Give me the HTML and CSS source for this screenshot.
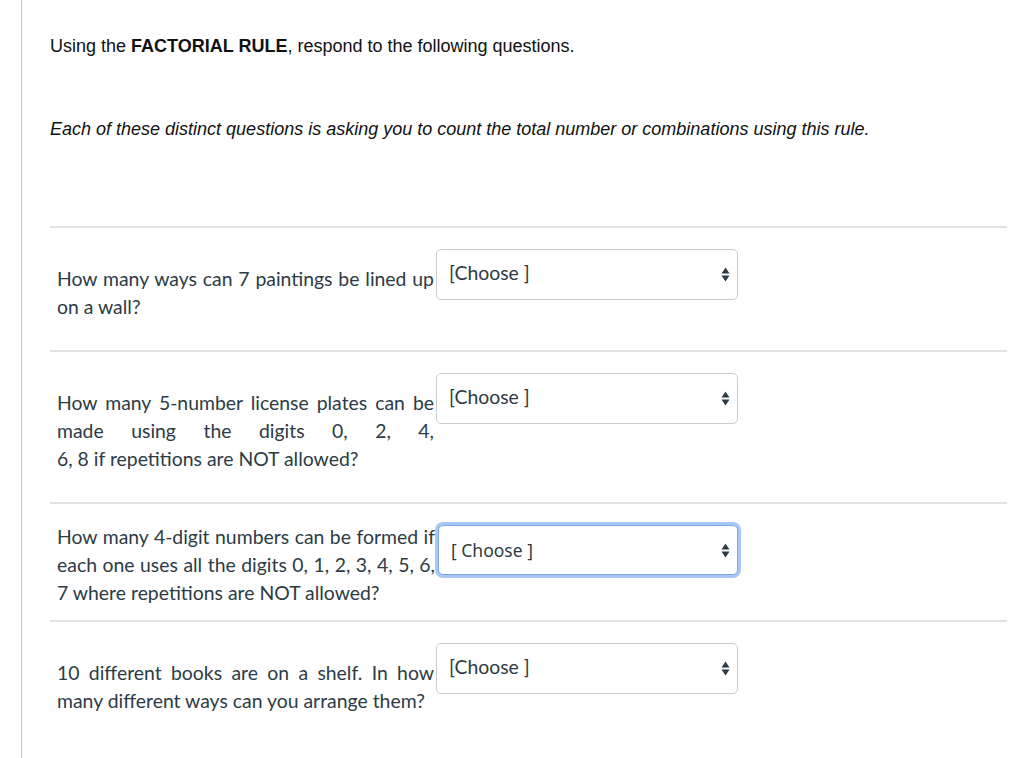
FILE: index.html
```html
<!DOCTYPE html>
<html lang="en">
    <head>
        <meta charset="utf-8">
        <title>Factorial Rule Quiz</title>
        <link rel="stylesheet" href="styles.css">
    </head>
    <body>
        <div class='page'>

            <div class='intro'>
                <p>Using the <strong>FACTORIAL RULE</strong>, respond to the following questions.</p>
                <p class='note'><em>Each of these distinct questions is asking you to count the total number or combinations using this rule.</em></p>
            </div>

            <div class='question'>
                <div class='qText'>How many ways can 7 paintings be lined up on a wall?</div>
                <div class='select'>
                    <span>[Choose ]</span>
                    <svg class='arrows' width='9' height='15' viewBox='0 0 9 15'><path d='M4.5 0.5 L8.5 6.5 L0.5 6.5 Z M0.5 8.5 L8.5 8.5 L4.5 14.5 Z'/></svg>
                </div>
            </div>

            <div class='question'>
                <div class='qText'>How many 5-number license plates can be made using the digits 0, 2, 4, <span class='keep'>6, 8 if repetitions</span> are NOT allowed?</div>
                <div class='select'>
                    <span>[Choose ]</span>
                    <svg class='arrows' width='9' height='15' viewBox='0 0 9 15'><path d='M4.5 0.5 L8.5 6.5 L0.5 6.5 Z M0.5 8.5 L8.5 8.5 L4.5 14.5 Z'/></svg>
                </div>
            </div>

            <div class='question focused'>
                <div class='qText'>How many 4-digit numbers can be formed if each one uses all the digits 0, 1, 2, 3, 4, 5, 6, 7 where repetitions are NOT allowed?</div>
                <div class='select'>
                    <span>[ Choose ]</span>
                    <svg class='arrows' width='9' height='15' viewBox='0 0 9 15'><path d='M4.5 0.5 L8.5 6.5 L0.5 6.5 Z M0.5 8.5 L8.5 8.5 L4.5 14.5 Z'/></svg>
                </div>
            </div>

            <div class='question'>
                <div class='qText'>10 different books are on a shelf. In how many different ways can you arrange them?</div>
                <div class='select'>
                    <span>[Choose ]</span>
                    <svg class='arrows' width='9' height='15' viewBox='0 0 9 15'><path d='M4.5 0.5 L8.5 6.5 L0.5 6.5 Z M0.5 8.5 L8.5 8.5 L4.5 14.5 Z'/></svg>
                </div>
            </div>

        </div>
    </body>
</html>
```

FILE: styles.css
```css
body
{
    margin:           0;
    background-color: #ffffff;
}

.page
{
    margin-left:  21px;
    margin-right: 17px;
    min-height:   758px;
    border-left:  1px solid #c4c4c4;
    padding-left: 28px;
}

.intro
{
    padding-top:    36px;
    padding-bottom: 87px;
    border-bottom:  2px solid #e2e2e2;
    font-family:    "Liberation Sans", Arial, sans-serif;
    font-size:      18px;
    line-height:    20px;
    color:          #111111;
}

.intro p
{
    margin: 0;
}

.intro .note
{
    margin-top: 63px;
}

.question
{
    display:        flex;
    align-items:    flex-start;
    padding:        21px 0 29px 0;
    border-bottom:  2px solid #e2e2e2;
    font-family:    Lato, "Open Sans", sans-serif;
    font-size:      19.4px;
    line-height:    28px;
    color:          #2d3b45;
}

.question:last-child
{
    border-bottom: none;
}

.qText
{
    width:        377px;
    margin-left:  7px;
    padding-top:  16px;
    text-align:   justify;
}

.keep
{
    white-space: nowrap;
}

.select
{
    display:          flex;
    align-items:      center;
    justify-content:  space-between;
    box-sizing:       border-box;
    width:            302px;
    height:           51px;
    margin-left:      2px;
    padding:          0 7px 0 12px;
    border:           1px solid #c7cdd1;
    border-radius:    5px;
    background-color: #ffffff;
}

.select span
{
    margin-top: -4px;
}

.arrows
{
    fill: #2d3b45;
}

.focused
{
    padding: 19px 0 13px 0;
}

.focused .qText
{
    width:       378px;
    padding-top: 0;
}

.focused .select
{
    width:        300px;
    height:       50px;
    margin-left:  3px;
    margin-top:   2px;
    border-color: #7aa7ea;
    box-shadow:   0 0 0 3px #a9c8f5;
    font-family:  "Noto Sans", "DejaVu Sans", sans-serif;
    font-size:    17.5px;
}

.focused .select span
{
    margin-top: 0;
}
```
